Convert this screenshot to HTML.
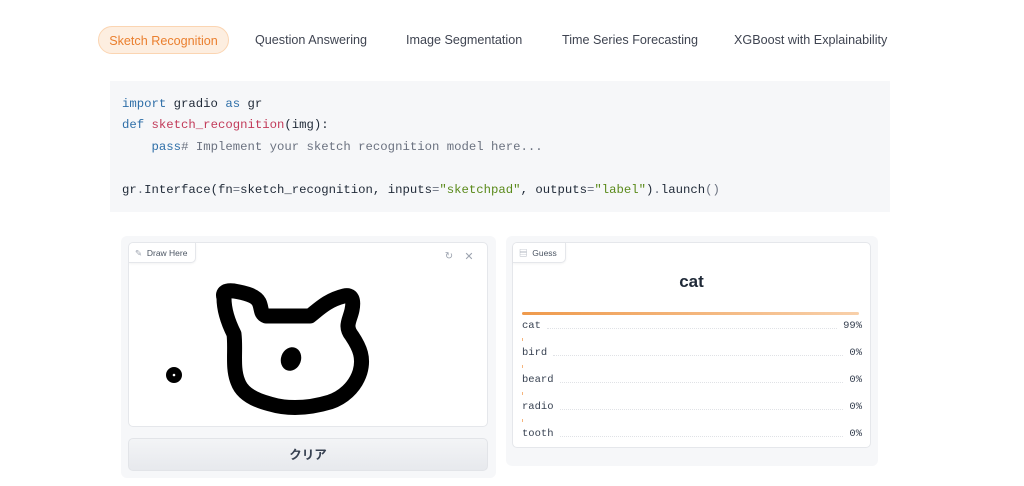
<!DOCTYPE html>
<html><head><meta charset="utf-8"><style>
*{box-sizing:border-box;margin:0;padding:0}
body{width:1024px;height:486px;background:#fff;font-family:"Liberation Sans","Noto Sans CJK JP",sans-serif;position:relative;overflow:hidden;color:#374151}
.tab{position:absolute;top:26px;height:28px;line-height:28px;font-size:12.6px;color:#3f4451;white-space:nowrap}
.pill{left:98px;width:131px;text-align:center;background:#fdeee0;border:1px solid #fbd5b2;border-radius:14px;color:#ea7f2e}
.code{position:absolute;left:110px;top:81px;width:780px;height:131px;background:#f6f7f9;font-family:"Liberation Mono",monospace;font-size:12.3px;color:#1f2937}
.code div{position:absolute;left:12px;white-space:pre}
.k{color:#2f6fa8}.f{color:#c23b5a}.s{color:#5a8a1a}.c{color:#6b7280}.o{color:#6b7280}
.panel{position:absolute;background:#f6f7f9;border-radius:6px}
.box{position:absolute;background:#fff;border:1px solid #e5e7eb;border-radius:5px}
.lbl{position:absolute;left:0;top:0;height:20px;padding:0 8px 0 6px;font-size:8.5px;line-height:20px;color:#4b5563;background:#fff;border:1px solid #e5e7eb;border-top:none;border-left:none;border-radius:4px 0 5px 0;box-shadow:0 1px 2px rgba(0,0,0,.05)}
.btn{position:absolute;left:128px;top:438px;width:360px;height:33px;border-radius:5px;background:linear-gradient(#f3f4f6,#e7e9ed);border:1px solid #e2e4e8;text-align:center;line-height:32px;font-size:12.5px;font-weight:bold;color:#374151}
.row{position:absolute;left:522px;width:340px;font-family:"Liberation Mono",monospace;font-size:10.5px;color:#374151;display:flex;align-items:flex-end}
.row .d{flex:1;border-bottom:1px dotted #e0e2e6;margin:0 6px 3px}
.tick{position:absolute;left:522px;width:1px;height:3px;background:#f6b57d}
</style></head><body>
<div class="tab pill">Sketch Recognition</div>
<div class="tab" style="left:255px">Question Answering</div>
<div class="tab" style="left:406px">Image Segmentation</div>
<div class="tab" style="left:562px">Time Series Forecasting</div>
<div class="tab" style="left:734px">XGBoost with Explainability</div>

<div class="code">
<div style="top:16px"><span class="k">import</span> gradio <span class="k">as</span> gr</div>
<div style="top:37px"><span class="k">def</span> <span class="f">sketch_recognition</span>(img):</div>
<div style="top:59px">    <span class="k">pass</span><span class="c"># Implement your sketch recognition model here...</span></div>
<div style="top:102px">gr<span class="o">.</span>Interface(fn<span class="o">=</span>sketch_recognition, inputs<span class="o">=</span><span class="s">"sketchpad"</span>, outputs<span class="o">=</span><span class="s">"label"</span>)<span class="o">.</span>launch<span class="o">()</span></div>
</div>

<div class="panel" style="left:121px;top:236px;width:375px;height:242px"></div>
<div class="box" style="left:128px;top:242px;width:360px;height:185px;overflow:hidden">
<div class="lbl"><span style="color:#9ca3af">✎</span>&nbsp; Draw Here</div>
<div style="position:absolute;right:30px;top:6px;width:16px;height:16px;font-size:10px;color:#9ca3af;text-align:center;line-height:16px">↻</div>
<div style="position:absolute;right:10px;top:6px;width:16px;height:16px;font-size:11px;color:#9ca3af;text-align:center;line-height:16px">✕</div>
</div>
<svg style="position:absolute;left:0;top:0" width="1024" height="486">
<path d="M224 298 C222 292 226 290 234 291 C246 293 256 296 259 302 C262 308 260 314 266 316 L310 316 C320 308 328 300 344 296 C352 294 354 300 352 310 C350 320 344 326 352 336 C360 348 364 358 360 372 C355 388 342 398 330 402 C310 408 290 410 270 404 C254 400 242 393 238 382 C232 368 236 350 234 334 C228 322 224 310 224 298 Z" fill="none" stroke="#000" stroke-width="15" stroke-linejoin="round"/>
<ellipse cx="291" cy="359" rx="10" ry="12" transform="rotate(20 291 359)" fill="#000"/>
<circle cx="174" cy="375" r="8" fill="#000"/>
<circle cx="174" cy="375" r="1.3" fill="#fff"/>
</svg>
<div class="btn">クリア</div>

<div class="panel" style="left:506px;top:236px;width:372px;height:230px"></div>
<div class="box" style="left:512px;top:242px;width:359px;height:206px">
<div class="lbl"><span style="color:#9ca3af">▤</span>&nbsp; Guess</div>
</div>
<div style="position:absolute;left:512px;width:359px;top:272px;text-align:center;font-size:17px;font-weight:bold;color:#1f2937">cat</div>
<div style="position:absolute;left:522px;top:312px;width:337px;height:3px;border-radius:2px;background:linear-gradient(90deg,#ef9a4c,#f8d0aa)"></div>
<div class="row" style="top:320px"><span>cat</span><span class="d"></span><span>99%</span></div>
<div class="tick" style="top:338px"></div>
<div class="row" style="top:347px"><span>bird</span><span class="d"></span><span>0%</span></div>
<div class="tick" style="top:365px"></div>
<div class="row" style="top:374px"><span>beard</span><span class="d"></span><span>0%</span></div>
<div class="tick" style="top:392px"></div>
<div class="row" style="top:401px"><span>radio</span><span class="d"></span><span>0%</span></div>
<div class="tick" style="top:419px"></div>
<div class="row" style="top:428px"><span>tooth</span><span class="d"></span><span>0%</span></div>
</body></html>
